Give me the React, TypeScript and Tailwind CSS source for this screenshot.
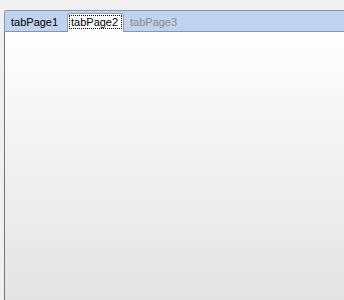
export default function App() {
  return (
    <div
      className="flex h-[300px] w-[344px] flex-col overflow-hidden bg-[#f0f0f0] pl-1 pt-[10px] text-[11px] leading-[13px]"
      style={{ fontFamily: '"Liberation Sans", Arial, sans-serif' }}
    >
      {/* tab strip */}
      <div className="flex h-[22px] shrink-0 rounded-tl-[3px] border-t border-b border-l border-[#8496b3] bg-[#bfd2ee]">
        <div className="flex w-[62px] items-center pl-[6px] pt-[2px] text-black">tabPage1</div>
        <div className="relative mt-[2px] h-[19px] w-[57px] rounded-t-[3px] border-x border-t border-[#8f9bb0] bg-white p-[1px]">
          <div className="flex h-[14px] items-center border border-dotted border-black pl-[1px] text-black">tabPage2</div>
        </div>
        <div className="flex items-center pl-[6px] pt-[2px] text-[#8c8c8c]">tabPage3</div>
      </div>
      {/* page body */}
      <div className="flex-1 border-l border-[#737373] bg-gradient-to-b from-[#fefefe] to-[#e4e4e4]" />
    </div>
  );
}
